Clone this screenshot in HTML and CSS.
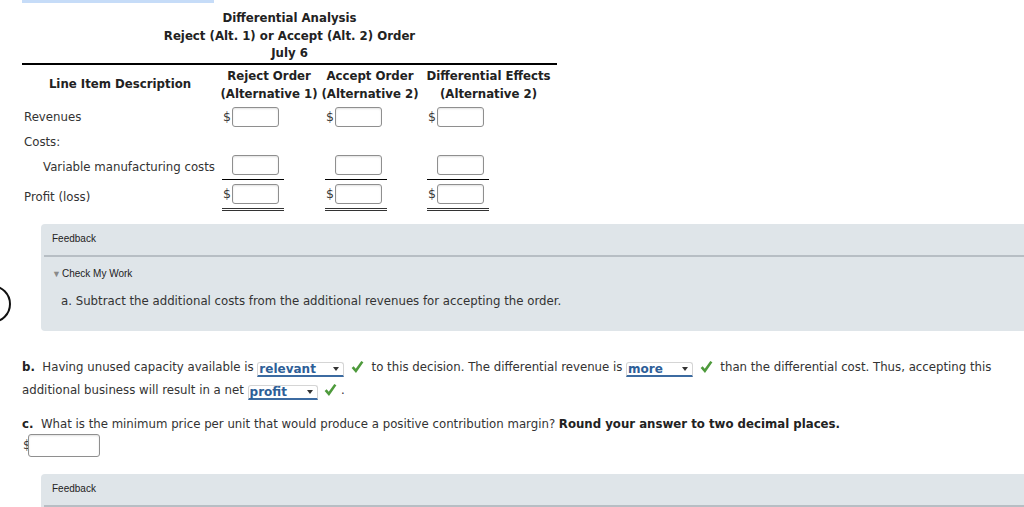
FILE: index.html
```html
<!DOCTYPE html>
<html lang="en">
<head>
    <meta charset="UTF-8">
    <title>Differential Analysis</title>
    <link rel="stylesheet" href="styles.css">
</head>
<body>
    <div class="top-bar"></div>

    <div class="analysis">
        <div class="analysis-title">
            <div>Differential Analysis</div>
            <div>Reject (Alt. 1) or Accept (Alt. 2) Order</div>
            <div>July 6</div>
        </div>

        <div class="row row-head">
            <div class="cell head-label">Line Item Description</div>
            <div class="cell head">Reject Order<br>(Alternative 1)</div>
            <div class="cell head">Accept Order<br>(Alternative 2)</div>
            <div class="cell head">Differential Effects<br>(Alternative 2)</div>
        </div>

        <div class="row row-revenue">
            <div class="cell label">Revenues</div>
            <div class="cell c1"><span class="field"><span class="cur">$</span><span class="box"></span></span></div>
            <div class="cell c2"><span class="field"><span class="cur">$</span><span class="box"></span></span></div>
            <div class="cell c3"><span class="field"><span class="cur">$</span><span class="box"></span></span></div>
        </div>

        <div class="row row-costs">
            <div class="cell label">Costs:</div>
        </div>

        <div class="row row-var">
            <div class="cell label indent">Variable manufacturing costs</div>
            <div class="cell c1"><span class="field single"><span class="cur"></span><span class="box"></span></span></div>
            <div class="cell c2"><span class="field single"><span class="cur"></span><span class="box"></span></span></div>
            <div class="cell c3"><span class="field single"><span class="cur"></span><span class="box"></span></span></div>
        </div>

        <div class="row row-profit">
            <div class="cell label">Profit (loss)</div>
            <div class="cell c1"><span class="field double"><span class="cur">$</span><span class="box"></span></span></div>
            <div class="cell c2"><span class="field double"><span class="cur">$</span><span class="box"></span></span></div>
            <div class="cell c3"><span class="field double"><span class="cur">$</span><span class="box"></span></span></div>
        </div>
    </div>

    <div class="side-circle"></div>

    <div class="feedback">
        <div class="feedback-title">Feedback</div>
        <div class="feedback-rule"></div>
        <div class="check-work"><span class="tri">&#9660;</span>Check My Work</div>
        <div class="feedback-text">a. Subtract the additional costs from the additional revenues for accepting the order.</div>
    </div>

    <p class="part part-b">
        <b>b.</b>&nbsp; Having unused capacity available is
        <span class="dd dd-relevant">relevant</span>
        <svg class="check" viewBox="0 0 12 12"><path d="M1.5 6.5 L4.5 10 L10.5 1.5" fill="none" stroke="#4e9a3c" stroke-width="2.4"/></svg>
        &nbsp;to this decision. The differential revenue is
        <span class="dd dd-more">more</span>
        <svg class="check" viewBox="0 0 12 12"><path d="M1.5 6.5 L4.5 10 L10.5 1.5" fill="none" stroke="#4e9a3c" stroke-width="2.4"/></svg>
        &nbsp;than the differential cost. Thus, accepting this
        additional business will result in a net
        <span class="dd dd-profit">profit</span>
        <svg class="check" viewBox="0 0 12 12"><path d="M1.5 6.5 L4.5 10 L10.5 1.5" fill="none" stroke="#4e9a3c" stroke-width="2.4"/></svg>
        .
    </p>

    <p class="part part-c">
        <b>c.</b>&nbsp; What is the minimum price per unit that would produce a positive contribution margin? <b>Round your answer to two decimal places.</b>
    </p>
    <div class="answer"><span class="cur">$</span><span class="box box-wide"></span></div>

    <div class="feedback feedback-2">
        <div class="feedback-title">Feedback</div>
        <div class="feedback-rule"></div>
    </div>
</body>
</html>
```

FILE: styles.css
```css
:root {
    --text-color: #333;
    --title-color: #222;
    --panel-color: #dfe5e9;
    --rule-color: #b7bec4;
    --select-blue: #2d5e97;
}

* {
    margin: 0;
    padding: 0;
    box-sizing: border-box;
}

body {
    font-family: 'DejaVu Sans', Verdana, sans-serif;
    font-size: 11.75px;
    color: var(--text-color);
    background: white;
    overflow: hidden;
    position: relative;
}

.top-bar {
    width: 192px;
    height: 3px;
    margin-left: 22px;
    background-color: #c6dcf8;
}

.analysis {
    width: 535px;
    margin-left: 22px;
}

.analysis-title {
    text-align: center;
    font-weight: bold;
    color: var(--title-color);
    line-height: 17.5px;
    padding-top: 7px;
    border-bottom: 2px solid #000;
}

.row {
    display: grid;
    grid-template-columns: 196px 102px 100px 137px;
}

.row-head {
    height: 40px;
    font-weight: bold;
    color: var(--title-color);
    line-height: 18px;
    padding-top: 2px;
}

.head {
    text-align: center;
    white-space: nowrap;
}

.head-label {
    text-align: center;
    align-self: center;
    margin-top: -3px;
}

.row-revenue {
    height: 25px;
    padding-top: 2px;
}

.row-costs {
    height: 24px;
    align-items: center;
}

.row-var {
    height: 26px;
}

.row-profit {
    padding-top: 4px;
}

.label {
    padding-left: 2px;
    display: flex;
    align-items: center;
    height: 20px;
    white-space: nowrap;
}

.row-var .label,
.row-profit .label {
    margin-top: 3px;
}

.row-costs .label {
    height: auto;
}

.indent {
    padding-left: 21px;
}

.c1 {
    padding-left: 4px;
}

.c2 {
    padding-left: 5px;
}

.c3 {
    padding-left: 7px;
}

.field {
    display: inline-flex;
    align-items: center;
    width: 62px;
    padding-left: 1px;
}

.field.single {
    padding-bottom: 4px;
    border-bottom: 1px solid #000;
}

.field.double {
    padding-bottom: 4px;
    border-bottom: 3px double #333;
}

.cur {
    display: inline-block;
    width: 9px;
    font-size: 12.5px;
    color: #3a3a3a;
}

.box {
    display: inline-block;
    width: 47px;
    height: 20px;
    border: 1px solid #8f8f8f;
    border-radius: 3px;
    background: white;
    box-shadow: inset 0 1px 2px rgb(0 0 0 / 0.12);
}

.side-circle {
    position: absolute;
    left: -27px;
    top: 285px;
    width: 38px;
    height: 38px;
    border: 2px solid #111;
    border-radius: 50%;
}

.feedback {
    margin: 13px -10px 0 41px;
    background-color: var(--panel-color);
    border-radius: 4px;
    padding: 9px 0 22px 11px;
}

.feedback-title {
    font-family: 'Liberation Sans', Arial, sans-serif;
    font-size: 10px;
    line-height: 12px;
    color: #222;
}

.feedback-rule {
    height: 2px;
    margin: 10px 0 0 -8px;
    background-color: var(--rule-color);
}

.check-work {
    font-family: 'Liberation Sans', Arial, sans-serif;
    font-size: 10px;
    line-height: 12px;
    color: #222;
    margin-top: 11px;
}

.tri {
    font-size: 9px;
    color: #8a8a8a;
    margin-right: 1px;
}

.feedback-text {
    margin: 13px 0 0 9px;
    line-height: 16px;
    color: var(--text-color);
}

.part {
    margin-left: 22px;
    margin-right: 20px;
}

.part b {
    color: var(--title-color);
}

.part-b {
    margin-top: 25px;
    line-height: 23px;
}

.dd {
    display: inline-block;
    position: relative;
    height: 15px;
    line-height: 13px;
    vertical-align: -2px;
    font-weight: bold;
    font-size: 12px;
    color: var(--select-blue);
    padding-left: 1px;
    border: 1px solid #d5d5d5;
    border-bottom: 2px solid #3c6ba1;
    border-radius: 3px 3px 0 0;
}

.dd::after {
    content: '';
    position: absolute;
    right: 4px;
    top: 4px;
    border-left: 3.5px solid transparent;
    border-right: 3.5px solid transparent;
    border-top: 4px solid #333;
}

.dd-relevant {
    width: 87px;
}

.dd-more {
    width: 67px;
}

.dd-profit {
    width: 70px;
}

.check {
    width: 13px;
    height: 13px;
    vertical-align: -2px;
    margin-left: 3px;
}

.part-c {
    margin-top: 13px;
    line-height: 18px;
}

.answer {
    margin: 1px 0 0 23px;
    display: flex;
    align-items: center;
}

.answer .cur {
    width: 6px;
    font-size: 12px;
}

.box-wide {
    width: 72px;
    height: 23px;
    margin-left: -1px;
}

.feedback-2 {
    margin-top: 17px;
}
```
